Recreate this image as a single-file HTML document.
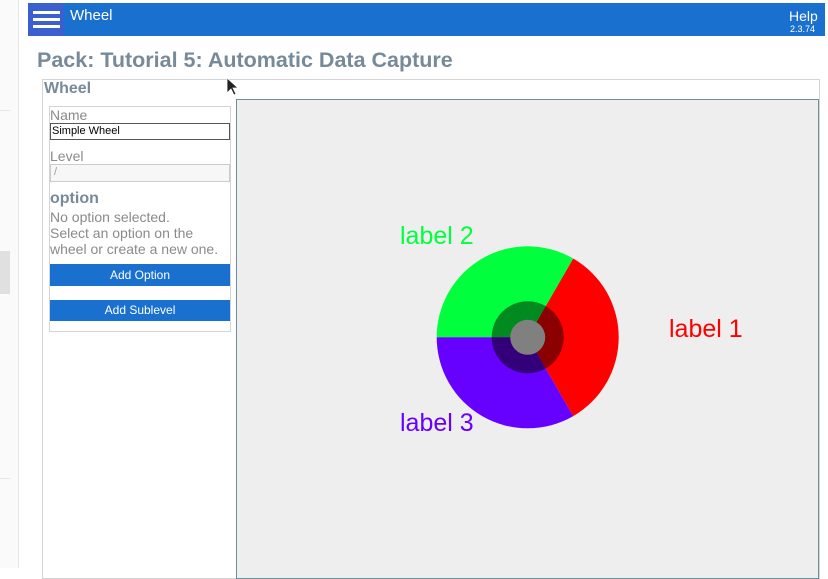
<!DOCTYPE html>
<html><head><meta charset="utf-8"><style>
*{margin:0;padding:0;box-sizing:border-box}
body{width:828px;height:568px;overflow:hidden;background:#fff;font-family:"Liberation Sans",sans-serif;position:relative}
.a{position:absolute}
</style></head><body>
<div class="a" style="left:0;top:0;width:19px;height:568px;background:#fafafa;border-right:1px solid #e6e6e6"></div>
<div class="a" style="left:0;top:110px;width:10px;height:1px;background:#e6e6e6"></div>
<div class="a" style="left:0;top:251px;width:10px;height:43px;background:#e0e0e0"></div>
<div class="a" style="left:0;top:478px;width:10px;height:1px;background:#e6e6e6"></div>

<div class="a" style="left:28px;top:3px;width:797px;height:33px;background:#1a70cf"></div>
<div class="a" style="left:28px;top:3px;width:36px;height:33px;background:#3a5fcf"></div>
<div class="a" style="left:33px;top:11px;width:27px;height:3px;background:#fff"></div>
<div class="a" style="left:33px;top:18px;width:27px;height:3px;background:#fff"></div>
<div class="a" style="left:33px;top:25px;width:27px;height:3px;background:#fff"></div>
<div class="a" style="left:70px;top:7px;color:#fff;font-size:15px">Wheel</div>
<div class="a" style="left:789px;top:8px;color:#fff;font-size:14px">Help</div>
<div class="a" style="left:790px;top:24px;color:#fff;font-size:9px">2.3.74</div>

<div class="a" style="left:37px;top:48px;color:#778a99;font-size:21.5px;font-weight:bold">Pack: Tutorial 5: Automatic Data Capture</div>

<div class="a" style="left:42px;top:79px;width:778px;height:500px;border:1px solid #d4d4d4"></div>
<div class="a" style="left:44px;top:80px;color:#778a99;font-size:16px;font-weight:bold">Wheel</div>
<div class="a" style="left:236px;top:99px;width:583px;height:480px;background:#eeeeee;border:1px solid #6f8f99"></div>

<div class="a" style="left:49px;top:106px;width:182px;height:226px;border:1px solid #d4d4d4"></div>
<div class="a" style="left:50px;top:107px;color:#8a8a8a;font-size:14px">Name</div>
<div class="a" style="left:50px;top:123px;width:180px;height:17px;border:1px solid #555;font-size:11px;padding:1px 0 0 1px;color:#000">Simple Wheel</div>
<div class="a" style="left:50px;top:148px;color:#8a8a8a;font-size:14px">Level</div>
<div class="a" style="left:50px;top:164px;width:180px;height:18px;border:1px solid #ccc;background:#f7f7f7;font-size:11px;padding:1px 0 0 3px;color:#999">/</div>
<div class="a" style="left:50px;top:190px;color:#778a99;font-size:16px;font-weight:bold">option</div>
<div class="a" style="left:50px;top:209px;color:#8a8a8a;font-size:14px;line-height:16px">No option selected.<br>Select an option on the<br>wheel or create a new one.</div>
<div class="a" style="left:50px;top:264px;width:180px;height:22px;background:#1a70cf;color:#fff;font-size:12px;text-align:center;line-height:22px">Add Option</div>
<div class="a" style="left:50px;top:300px;width:180px;height:21px;background:#1a70cf;color:#fff;font-size:12px;text-align:center;line-height:21px">Add Sublevel</div>

<svg class="a" style="left:0;top:0" width="828" height="568">
<path d="M527.7 337.3 L573.2 258.5 A91 91 0 0 1 573.2 416.1Z" fill="#ff0000"/>
<path d="M527.7 337.3 L436.7 337.3 A91 91 0 0 1 573.2 258.5Z" fill="#00ff3c"/>
<path d="M527.7 337.3 L573.2 416.1 A91 91 0 0 1 436.7 337.3Z" fill="#6600ff"/>
<path d="M527.7 337.3 L545.7 306.1 A36 36 0 0 1 545.7 368.5Z" fill="#8b0000"/>
<path d="M527.7 337.3 L491.7 337.3 A36 36 0 0 1 545.7 306.1Z" fill="#008a1f"/>
<path d="M527.7 337.3 L545.7 368.5 A36 36 0 0 1 491.7 337.3Z" fill="#33007a"/>
<circle cx="527.7" cy="337.3" r="17.5" fill="#808080"/>
<text x="400" y="244" font-family="Liberation Sans" font-size="25" fill="#00ff3c">label 2</text>
<text x="669" y="337" font-family="Liberation Sans" font-size="25" fill="#ff0000">label 1</text>
<text x="400" y="431" font-family="Liberation Sans" font-size="25" fill="#6600ff">label 3</text>
<path d="M227 78 L227 93 L231 89 L234 95 L236 94 L233 88 L238 88Z" fill="#222" stroke="#fff" stroke-width="0.8"/>
</svg>
</body></html>
